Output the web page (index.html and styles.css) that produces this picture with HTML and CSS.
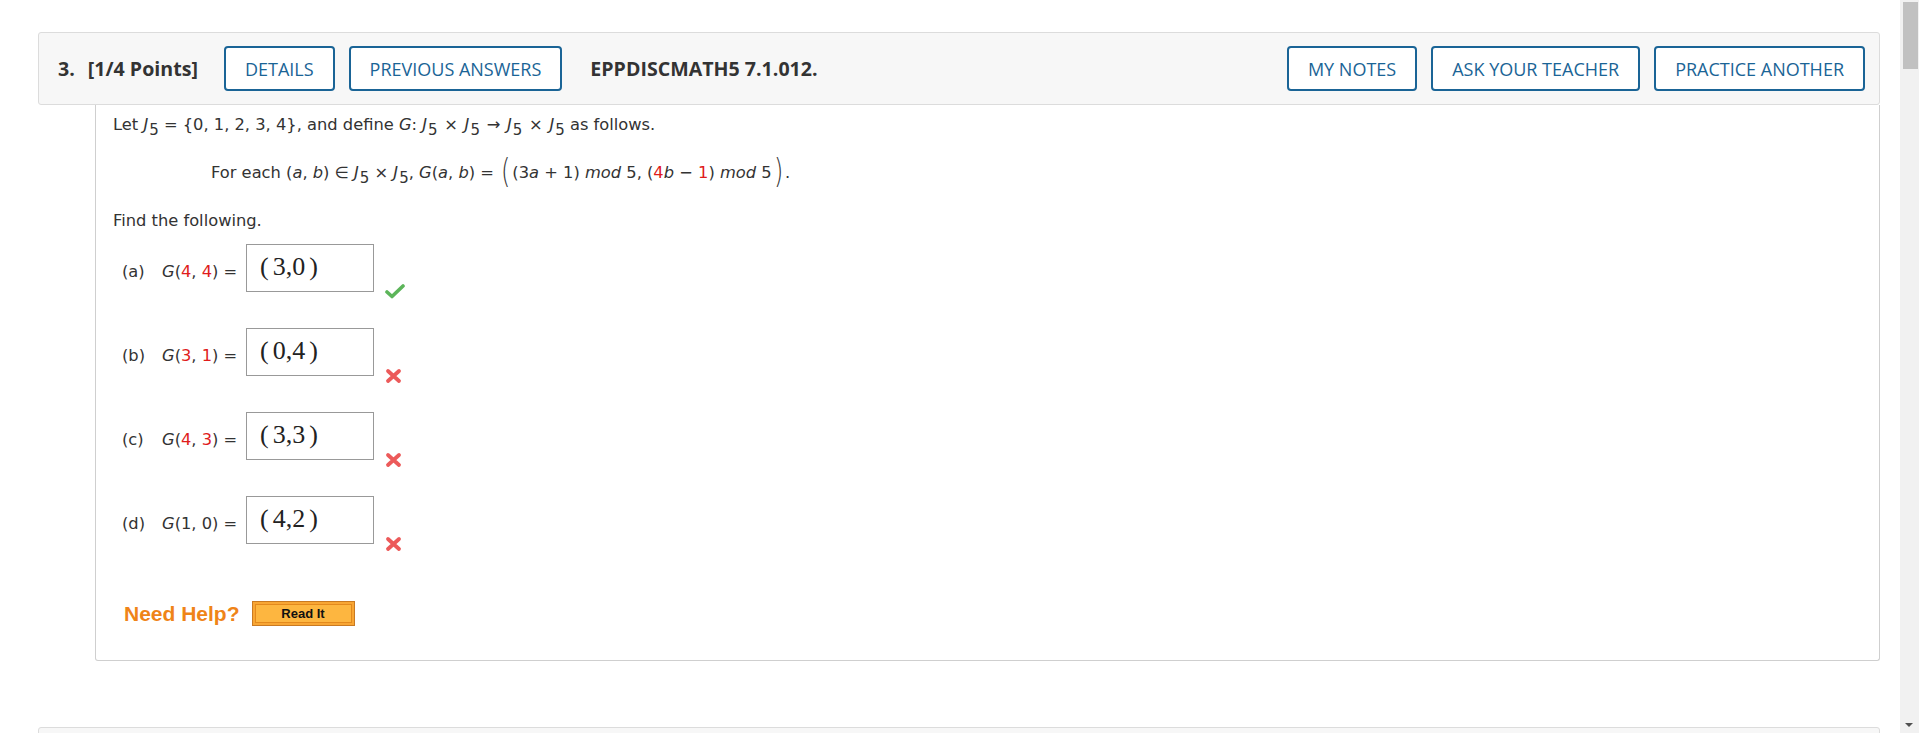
FILE: index.html
```html
<!DOCTYPE html>
<html>
<head>
<meta charset="utf-8">
<link rel="stylesheet" href="styles.css">
</head>
<body>
<div class="page">
  <div class="qhead">
    <span class="qnum">3.</span>
    <span class="qpts">[1/4 Points]</span>
    <button class="btn">DETAILS</button>
    <button class="btn">PREVIOUS ANSWERS</button>
    <span class="qcode">EPPDISCMATH5 7.1.012.</span>
    <div class="hright">
      <button class="btn">MY NOTES</button>
      <button class="btn">ASK YOUR TEACHER</button>
      <button class="btn">PRACTICE ANOTHER</button>
    </div>
  </div>
  <div class="qbody">
    <p class="line1">Let <i>J</i><sub>5</sub> = {0, 1, 2, 3, 4}, and define <i>G</i>: <i>J</i><sub>5</sub> <span class="op">×</span> <i>J</i><sub>5</sub> <span class="op">→</span> <i>J</i><sub>5</sub> <span class="op">×</span> <i>J</i><sub>5</sub> as follows.</p>
    <p class="line2">For each (<i>a</i>, <i>b</i>) ∈ <i>J</i><sub>5</sub> × <i>J</i><sub>5</sub>, <i>G</i>(<i>a</i>, <i>b</i>) = <span class="bigp">(</span>(3<i>a</i> + 1) <i>mod</i> 5, (<span class="red">4</span><i>b</i> − <span class="red">1</span>) <i>mod</i> 5<span class="bigp">)</span>.</p>
    <p class="line3">Find the following.</p>
    <div class="answers">
      <div class="row">
        <span class="lab">(a)</span>
        <span class="expr"><i>G</i>(<span class="red">4</span>, <span class="red">4</span>) =</span>
        <span class="box"><span class="par">(</span>3,0<span class="par">)</span></span>
        <svg class="mark" viewBox="0 0 20 16" width="20" height="16"><path d="M2 9 L7 13.5 L18 3" fill="none" stroke="#5cb55a" stroke-width="3.6" stroke-linecap="round" stroke-linejoin="round"/></svg>
      </div>
      <div class="row">
        <span class="lab">(b)</span>
        <span class="expr"><i>G</i>(<span class="red">3</span>, <span class="red">1</span>) =</span>
        <span class="box"><span class="par">(</span>0,4<span class="par">)</span></span>
        <svg class="mark x" viewBox="0 0 17 16" width="17" height="16"><path d="M3 3 L14 13 M14 3 L3 13" fill="none" stroke="#ec5a5a" stroke-width="3.8" stroke-linecap="round"/></svg>
      </div>
      <div class="row">
        <span class="lab">(c)</span>
        <span class="expr"><i>G</i>(<span class="red">4</span>, <span class="red">3</span>) =</span>
        <span class="box"><span class="par">(</span>3,3<span class="par">)</span></span>
        <svg class="mark x" viewBox="0 0 17 16" width="17" height="16"><path d="M3 3 L14 13 M14 3 L3 13" fill="none" stroke="#ec5a5a" stroke-width="3.8" stroke-linecap="round"/></svg>
      </div>
      <div class="row">
        <span class="lab">(d)</span>
        <span class="expr"><i>G</i>(1, 0) =</span>
        <span class="box"><span class="par">(</span>4,2<span class="par">)</span></span>
        <svg class="mark x" viewBox="0 0 17 16" width="17" height="16"><path d="M3 3 L14 13 M14 3 L3 13" fill="none" stroke="#ec5a5a" stroke-width="3.8" stroke-linecap="round"/></svg>
      </div>
      <div class="help">
        <span class="needhelp">Need Help?</span>
        <span class="readit"><span class="readin">Read It</span></span>
      </div>
    </div>
  </div>
  <div class="qhead next"></div>
</div>
<div class="scrollbar">
  <div class="thumb"></div>
  <div class="arrow"></div>
</div>
</body>
</html>
```
FILE: styles.css
```css
html, body {
  margin: 0;
  padding: 0;
  background: #fff;
  overflow: hidden;
  height: 733px;
}
.page {
  padding: 32px 0 0 38px;
  width: 1842px;
}
.qhead {
  display: flex;
  align-items: center;
  box-sizing: border-box;
  height: 73px;
  background: #f7f7f7;
  border: 1px solid #dcdcdc;
  border-radius: 3px;
  padding: 0 14px 0 19px;
  font-family: "Open Sans", sans-serif;
  font-size: 19.6px;
  color: #333;
}
.qhead.next {
  margin-top: 66px;
}
.qnum {
  font-weight: 700;
  margin-right: 13px;
}
.qpts {
  font-weight: 700;
  margin-right: 26px;
}
.qcode {
  font-weight: 700;
  margin-left: 14px;
}
.btn {
  height: 45px;
  box-sizing: border-box;
  border: 2px solid #1a6496;
  border-radius: 4px;
  background: #fff;
  color: #1a6496;
  font-family: "Open Sans", sans-serif;
  font-size: 18px;
  padding: 0 19px;
  margin-right: 14px;
  cursor: pointer;
}
.hright {
  margin-left: auto;
  display: flex;
}
.hright .btn:last-child {
  margin-right: 0;
}
.qbody {
  margin-left: 57px;
  border: 1px solid #cfcfcf;
  border-top: none;
  border-radius: 0 0 3px 3px;
  padding: 1px 17px 32px 17px;
  height: 522px;
  font-family: "DejaVu Sans", Verdana, sans-serif;
  font-size: 16.3px;
  color: #333;
}
.qbody p {
  margin: 0;
}
.qbody sub {
  font-size: 15px;
  vertical-align: -5px;
  line-height: 0;
  margin-left: 1px;
}
.op {
  margin: 0 1.5px;
}
.line1 {
  margin-top: 8px !important;
  line-height: 22px;
}
.line2 {
  margin: 24px 0 0 98px !important;
  line-height: 26px;
}
.bigp {
  font-size: 34px;
  font-weight: 200;
  vertical-align: -5px;
  line-height: 0;
  font-family: "DejaVu Sans", sans-serif;
  transform: scaleX(0.7);
  display: inline-block;
}
.line3 {
  margin-top: 24px !important;
  line-height: 22px;
}
.red {
  color: #e01c1c;
}
.answers {
  padding-left: 9px;
  margin-top: 12px;
}
.row {
  display: flex;
  align-items: center;
  height: 48px;
  margin-bottom: 36px;
}
.lab {
  width: 40px;
  padding-top: 7px;
}
.expr {
  width: 84px;
  padding-top: 7px;
  white-space: nowrap;
}
.box {
  box-sizing: border-box;
  width: 128px;
  height: 48px;
  border: 1px solid #999;
  padding-left: 11px;
  font-family: "Liberation Serif", "Times New Roman", serif;
  font-size: 26px;
  line-height: 44px;
  color: #222;
}
.par {
  margin: 0 4px 0 2px;
  font-weight: 300;
}
.par:last-child {
  margin: 0 0 0 4px;
}
.mark {
  align-self: flex-end;
  margin: 0 0 -7px 11px;
}
.mark.x {
  margin-bottom: -8px;
}
.help {
  display: flex;
  align-items: center;
  margin-top: 57px;
  padding-left: 2px;
}
.needhelp {
  font-family: "Liberation Sans", Arial, sans-serif;
  font-weight: 700;
  font-size: 21px;
  color: #ef8418;
  margin-right: 12px;
}
.readit {
  box-sizing: border-box;
  width: 103px;
  height: 25px;
  border: 1px solid #c97a22;
  background: #f8a634;
  padding: 2px;
  display: flex;
}
.readin {
  flex: 1;
  border: 1px solid #e3891d;
  background: #fdb640;
  font-family: "Liberation Sans", Arial, sans-serif;
  font-weight: 700;
  font-size: 13px;
  color: #111;
  text-align: center;
  line-height: 17px;
}
.scrollbar {
  position: fixed;
  top: 0;
  right: 0;
  width: 19px;
  height: 733px;
  background: #f1f1f1;
}
.thumb {
  position: absolute;
  top: 2px;
  left: 3px;
  width: 15px;
  height: 67px;
  background: #c1c1c1;
}
.arrow {
  position: absolute;
  bottom: 6px;
  left: 5px;
  width: 0;
  height: 0;
  border-left: 4px solid transparent;
  border-right: 4px solid transparent;
  border-top: 4px solid #505050;
}
```
